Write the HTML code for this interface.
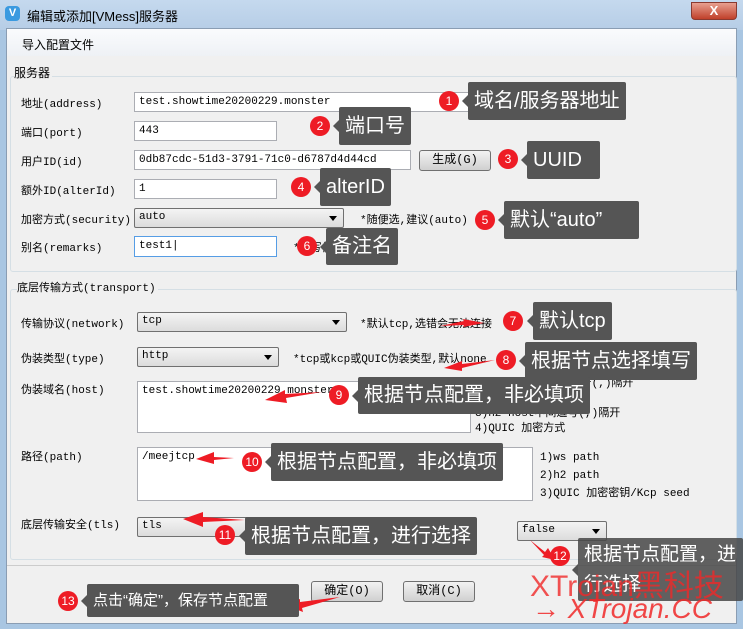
<!DOCTYPE html>
<html><head><meta charset="utf-8"><style>
*{margin:0;padding:0;box-sizing:border-box}
body{width:743px;height:629px;overflow:hidden;background:#a9c6e2;font-family:"Liberation Mono","Noto Sans CJK SC",monospace;font-size:11px;color:#000;position:relative}
.a{position:absolute}
.t{position:absolute;font-family:"Liberation Sans","Noto Sans CJK SC",sans-serif;font-size:12px;white-space:nowrap}
.m{position:absolute;font-family:"Liberation Mono","Noto Sans CJK SC",monospace;font-size:11px;white-space:nowrap}
.in{position:absolute;background:#fff;border:1px solid #abadb3;padding:3px 4px;font-size:11px;white-space:nowrap;overflow:hidden}
.sel{position:absolute;background:linear-gradient(#f4f4f4,#dcdcdc);border:1px solid #707070;border-radius:2px;padding:2px 4px;font-size:11px}
.sel:after{content:"";position:absolute;right:6px;top:7px;border:4px solid transparent;border-top:5px solid #000}
.btn{position:absolute;background:linear-gradient(#f2f2f2,#d0d0d0);border:1px solid #707070;border-radius:3px;text-align:center;font-size:12px;line-height:19px}
.c{position:absolute;width:20px;height:20px;border-radius:50%;background:#ee1c25;color:#fff;font-family:"Liberation Sans",sans-serif;font-size:12px;text-align:center;line-height:20px}
.b{position:absolute;background:#555;color:#fff;font-family:"Liberation Sans","Noto Sans CJK SC",sans-serif;font-size:20px;padding:0 6px;white-space:nowrap;border-radius:2px}
.b:before{content:"";position:absolute;left:-6px;top:50%;margin-top:-6px;border:6px solid transparent;border-left:0;border-right:6px solid #555}
.grp{position:absolute;border:1px solid #d5dfe5;border-radius:3px}
</style></head><body>
<div class="a" style="left:0;top:0;width:743px;height:30px;background:linear-gradient(#c5d9ee,#b6cde6)"></div>
<div class="a" style="left:5px;top:6px;width:15px;height:15px;border-radius:4px;background:#3a9ae0;color:#fff;font:bold 11px 'Liberation Sans';text-align:center;line-height:15px">V</div>
<div class="t" style="left:27px;top:6px;font-size:13px">编辑或添加[VMess]服务器</div>
<div class="a" style="left:691px;top:2px;width:46px;height:18px;border-radius:0 0 4px 4px;background:linear-gradient(#e8a090,#c0402a);border:1px solid #8a3a30;color:#fff;font:bold 13px 'Liberation Sans';text-align:center;line-height:16px">X</div>
<div class="a" style="left:6px;top:28px;width:731px;height:596px;background:#f0f0f0;border:1px solid #8a9db3"></div>
<div class="a" style="left:7px;top:29px;width:729px;height:27px;background:linear-gradient(#fafbfd,#eef1f5)"></div>
<div class="t" style="left:22px;top:36px">导入配置文件</div>
<div class="grp" style="left:10px;top:76px;width:727px;height:196px"></div>
<div class="t" style="left:14px;top:64px;background:#f0f0f0;padding-right:2px">服务器</div>
<div class="grp" style="left:10px;top:289px;width:727px;height:271px"></div>
<div class="m" style="left:17px;top:279px;background:#f0f0f0;padding-right:2px">底层传输方式(transport)</div>
<div class="a" style="left:7px;top:565px;width:729px;height:1px;background:#ccc"></div>

<div class="m" style="left:21px;top:95px">地址(address)</div>
<div class="in" style="left:134px;top:92px;width:350px;height:20px">test.showtime20200229.monster</div>
<div class="m" style="left:21px;top:124px">端口(port)</div>
<div class="in" style="left:134px;top:121px;width:143px;height:20px">443</div>
<div class="m" style="left:21px;top:153px">用户ID(id)</div>
<div class="in" style="left:134px;top:150px;width:277px;height:20px">0db87cdc-51d3-3791-71c0-d6787d4d44cd</div>
<div class="btn" style="left:419px;top:150px;width:72px;height:21px">生成(G)</div>
<div class="m" style="left:21px;top:182px">额外ID(alterId)</div>
<div class="in" style="left:134px;top:179px;width:143px;height:20px">1</div>
<div class="m" style="left:21px;top:211px">加密方式(security)</div>
<div class="sel" style="left:134px;top:208px;width:210px;height:20px">auto</div>
<div class="m" style="left:360px;top:211px">*随便选,建议(auto)</div>
<div class="m" style="left:21px;top:239px">别名(remarks)</div>
<div class="in" style="left:134px;top:236px;width:143px;height:21px;border-color:#569de5">test1|</div>
<div class="m" style="left:293px;top:239px">*填写你的备注管理</div>

<div class="m" style="left:21px;top:315px">传输协议(network)</div>
<div class="sel" style="left:137px;top:312px;width:210px;height:20px">tcp</div>
<div class="m" style="left:360px;top:315px">*默认tcp,选错会无法连接</div>
<div class="m" style="left:21px;top:350px">伪装类型(type)</div>
<div class="sel" style="left:137px;top:347px;width:142px;height:20px">http</div>
<div class="m" style="left:293px;top:350px">*tcp或kcp或QUIC伪装类型,默认none</div>
<div class="m" style="left:21px;top:381px">伪装域名(host)</div>
<div class="in" style="left:137px;top:381px;width:334px;height:52px">test.showtime20200229.monster</div>
<div class="m" style="left:475px;top:377px;line-height:15px">1)http host中间逗号(,)隔开<br>2)ws host<br>3)h2 host中间逗号(,)隔开<br>4)QUIC 加密方式</div>
<div class="m" style="left:21px;top:448px">路径(path)</div>
<div class="in" style="left:137px;top:447px;width:396px;height:54px">/meejtcp</div>
<div class="m" style="left:540px;top:449px;line-height:18px">1)ws path<br>2)h2 path<br>3)QUIC 加密密钥/Kcp seed</div>
<div class="m" style="left:21px;top:516px">底层传输安全(tls)</div>
<div class="sel" style="left:137px;top:517px;width:142px;height:20px">tls</div>
<div class="m" style="left:300px;top:523px">跳过证书验证(allowInsecure)</div>
<div class="sel" style="left:517px;top:521px;width:90px;height:20px">false</div>
<div class="btn" style="left:311px;top:581px;width:72px;height:21px">确定(O)</div>
<div class="btn" style="left:403px;top:581px;width:72px;height:21px">取消(C)</div>

<svg class="a" style="left:0;top:0" width="743" height="629">
<g fill="#ee1c25">
<polygon points="440,326 464,321 463,319 484,323 463,327 464,325"/>
<polygon points="444,368 462,361 462,364 495,360 462,368 462,371"/>
<polygon points="265,400 285,390 285,394 322,392 286,398 287,403"/>
<polygon points="196,459 214,452 214,457 234,458 214,460 214,464"/>
<polygon points="183,519 203,512 203,517 245,520 203,522 203,527"/>
<polygon points="530,540 545,552 548,548 555,560 542,557 544,555"/>
<polygon points="285,605 300,599 300,602 340,597 302,608 303,612"/>
</g>
</svg>

<div class="c" style="left:439px;top:91px">1</div><div class="b" style="left:468px;top:82px;height:38px;line-height:38px">域名/服务器地址</div>
<div class="c" style="left:310px;top:116px">2</div><div class="b" style="left:339px;top:107px;height:38px;line-height:38px">端口号</div>
<div class="c" style="left:498px;top:149px">3</div><div class="b" style="left:527px;top:141px;height:38px;line-height:38px;width:73px">UUID</div>
<div class="c" style="left:291px;top:177px">4</div><div class="b" style="left:320px;top:168px;height:38px;line-height:38px">alterID</div>
<div class="c" style="left:475px;top:210px">5</div><div class="b" style="left:504px;top:201px;height:38px;line-height:38px;width:135px">默认“auto”</div>
<div class="c" style="left:297px;top:236px">6</div><div class="b" style="left:326px;top:228px;height:37px;line-height:37px">备注名</div>
<div class="c" style="left:503px;top:311px">7</div><div class="b" style="left:533px;top:302px;height:38px;line-height:38px">默认tcp</div>
<div class="c" style="left:496px;top:350px">8</div><div class="b" style="left:525px;top:342px;height:38px;line-height:38px">根据节点选择填写</div>
<div class="c" style="left:329px;top:385px">9</div><div class="b" style="left:358px;top:377px;height:37px;line-height:37px">根据节点配置，非必填项</div>
<div class="c" style="left:242px;top:452px">10</div><div class="b" style="left:271px;top:443px;height:38px;line-height:38px">根据节点配置，非必填项</div>
<div class="c" style="left:215px;top:525px">11</div><div class="b" style="left:245px;top:517px;height:38px;line-height:38px">根据节点配置，进行选择</div>
<div class="c" style="left:550px;top:546px">12</div><div class="b" style="left:578px;top:538px;width:165px;height:63px;line-height:30px;padding-top:2px;white-space:normal;font-size:19px;background:rgba(70,70,70,.85)">根据节点配置，进行选择</div>
<div class="c" style="left:58px;top:591px">13</div><div class="b" style="left:87px;top:584px;height:33px;line-height:33px;font-size:15px;width:212px">点击“确定”，保存节点配置</div>
<div class="t" style="left:530px;top:561px;font-size:30px;color:rgba(240,40,40,.8)">XTrojan黑科技</div>
<div class="t" style="left:532px;top:593px;font-size:28px;font-style:italic;color:rgba(240,40,40,.85)"><span style="font-style:normal">→</span> XTrojan.CC</div>
</body></html>
